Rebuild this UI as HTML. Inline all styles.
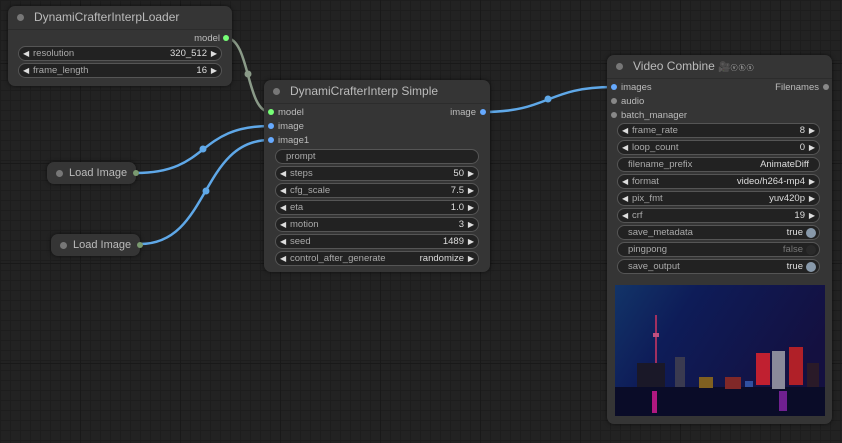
<!DOCTYPE html><html><head><style>
body{margin:0;width:842px;height:443px;overflow:hidden;background:#222;font-family:"Liberation Sans",sans-serif;position:relative}
.grid{position:absolute;inset:0;background-image:linear-gradient(#1d1d1d 1px,transparent 1px),linear-gradient(90deg,#1d1d1d 1px,transparent 1px);background-size:10px 10px}
.grid2{position:absolute;inset:0;background-image:linear-gradient(#191919 1px,transparent 1px),linear-gradient(90deg,#191919 1px,transparent 1px);background-size:100px 100px;background-position:-20px -37px}
.node{position:absolute;background:#353535;border-radius:7px;box-shadow:0 0 4px rgba(0,0,0,.6)}
.title{position:absolute;left:0;right:0;top:0;height:23px;border-bottom:1px solid #2c2c2c;color:#bbb;font-size:12px;line-height:23px;padding-left:26px}
.title:before{content:"";position:absolute;left:9px;top:8px;width:7px;height:7px;border-radius:50%;background:#777}
.w{position:absolute;height:13px;border:1px solid #555;border-radius:8px;background:#222;color:#aaa;font-size:9.5px;line-height:13px}
.w .l{position:absolute;left:14px}.w .v{position:absolute;right:14px;color:#ddd}
.w .al{position:absolute;left:4px;top:0;font-size:8px;color:#ddd}.w .ar{position:absolute;right:4px;top:0;font-size:8px;color:#ddd}
.w.nl .l{left:10px}.w.nl .v{right:10px}
.s{position:absolute;font-size:9.5px;color:#bbb}
.d{position:absolute;width:6px;height:6px;border-radius:50%}
.tg{position:absolute;right:3px;top:1.5px;width:10px;height:10px;border-radius:50%;background:#8899aa}
</style></head><body>
<div class="grid"></div><div class="grid2"></div>
<svg style="position:absolute;left:0;top:0" width="842" height="443">
<path d="M226,38 C250,38 246,112 270,112" stroke="#8a9a88" stroke-width="2.5" fill="none"/>
<circle cx="248" cy="74" r="3.5" fill="#8a9a88"/>
<path d="M136,173 C210,173 196,126 270,126" stroke="#5fa8e8" stroke-width="2.5" fill="none"/>
<circle cx="203" cy="149" r="3.5" fill="#5fa8e8"/>
<path d="M140,244 C210,244 200,140 270,140" stroke="#5fa8e8" stroke-width="2.5" fill="none"/>
<circle cx="206" cy="191" r="3.5" fill="#5fa8e8"/>
<path d="M483,112 C550,112 546,87 613,87" stroke="#5fa8e8" stroke-width="2.5" fill="none"/>
<circle cx="548" cy="99" r="3.5" fill="#5fa8e8"/>
</svg>

<div class="node" style="left:8px;top:6px;width:224px;height:80px">
<div class="title">DynamiCrafterInterpLoader</div>
<div class="s" style="right:12px;top:27px">model</div><div class="d" style="right:3px;top:29px;background:#7f7"></div>
<div class="w" style="left:10px;top:40px;width:202px"><span class="al">◀</span><span class="l">resolution</span><span class="v">320_512</span><span class="ar">▶</span></div>
<div class="w" style="left:10px;top:57px;width:202px"><span class="al">◀</span><span class="l">frame_length</span><span class="v">16</span><span class="ar">▶</span></div>
</div>

<div class="node" style="left:47px;top:162px;width:89px;height:22px"><div class="title" style="border:0;height:22px;line-height:22px;font-size:11px;padding-left:22px">Load Image</div><div class="d" style="right:-3px;top:8px;background:#7a9a70"></div></div>
<div class="node" style="left:51px;top:234px;width:89px;height:22px"><div class="title" style="border:0;height:22px;line-height:22px;font-size:11px;padding-left:22px">Load Image</div><div class="d" style="right:-3px;top:8px;background:#7a9a70"></div></div>

<div class="node" style="left:264px;top:80px;width:226px;height:192px">
<div class="title">DynamiCrafterInterp Simple</div>
<div class="d" style="left:4px;top:29px;background:#7f7"></div><div class="s" style="left:14px;top:27px">model</div>
<div class="d" style="left:4px;top:43px;background:#6af"></div><div class="s" style="left:14px;top:41px">image</div>
<div class="d" style="left:4px;top:57px;background:#6af"></div><div class="s" style="left:14px;top:55px">image1</div>
<div class="s" style="right:14px;top:27px">image</div><div class="d" style="right:4px;top:29px;background:#6af"></div>
<div class="w nl" style="left:11px;top:69px;width:202px"><span class="l">prompt</span></div>
<div class="w" style="left:11px;top:86px;width:202px"><span class="al">◀</span><span class="l">steps</span><span class="v">50</span><span class="ar">▶</span></div>
<div class="w" style="left:11px;top:103px;width:202px"><span class="al">◀</span><span class="l">cfg_scale</span><span class="v">7.5</span><span class="ar">▶</span></div>
<div class="w" style="left:11px;top:120px;width:202px"><span class="al">◀</span><span class="l">eta</span><span class="v">1.0</span><span class="ar">▶</span></div>
<div class="w" style="left:11px;top:137px;width:202px"><span class="al">◀</span><span class="l">motion</span><span class="v">3</span><span class="ar">▶</span></div>
<div class="w" style="left:11px;top:154px;width:202px"><span class="al">◀</span><span class="l">seed</span><span class="v">1489</span><span class="ar">▶</span></div>
<div class="w" style="left:11px;top:171px;width:202px"><span class="al">◀</span><span class="l">control_after_generate</span><span class="v">randomize</span><span class="ar">▶</span></div>
</div>

<div class="node" style="left:607px;top:55px;width:225px;height:369px">
<div class="title">Video Combine <span style="font-size:10px;color:#ccc">🎥</span><span style="font-size:7px;color:#ccc;letter-spacing:1px">ⓥⓗⓢ</span></div>
<div class="d" style="left:4px;top:29px;background:#6af"></div><div class="s" style="left:14px;top:27px">images</div>
<div class="d" style="left:4px;top:43px;background:#888"></div><div class="s" style="left:14px;top:41px">audio</div>
<div class="d" style="left:4px;top:57px;background:#888"></div><div class="s" style="left:14px;top:55px">batch_manager</div>
<div class="s" style="right:13px;top:27px">Filenames</div><div class="d" style="right:3px;top:29px;background:#888"></div>
<div class="w" style="left:10px;top:68px;width:201px"><span class="al">◀</span><span class="l">frame_rate</span><span class="v">8</span><span class="ar">▶</span></div>
<div class="w" style="left:10px;top:85px;width:201px"><span class="al">◀</span><span class="l">loop_count</span><span class="v">0</span><span class="ar">▶</span></div>
<div class="w nl" style="left:10px;top:102px;width:201px"><span class="l">filename_prefix</span><span class="v">AnimateDiff</span></div>
<div class="w" style="left:10px;top:119px;width:201px"><span class="al">◀</span><span class="l">format</span><span class="v">video/h264-mp4</span><span class="ar">▶</span></div>
<div class="w" style="left:10px;top:136px;width:201px"><span class="al">◀</span><span class="l">pix_fmt</span><span class="v">yuv420p</span><span class="ar">▶</span></div>
<div class="w" style="left:10px;top:153px;width:201px"><span class="al">◀</span><span class="l">crf</span><span class="v">19</span><span class="ar">▶</span></div>
<div class="w nl" style="left:10px;top:170px;width:201px"><span class="l">save_metadata</span><span class="v" style="right:16px">true</span><span class="tg"></span></div>
<div class="w nl" style="left:10px;top:187px;width:201px"><span class="l">pingpong</span><span class="v" style="right:16px;color:#777">false</span><span class="tg" style="background:#2a2a2a"></span></div>
<div class="w nl" style="left:10px;top:204px;width:201px"><span class="l">save_output</span><span class="v" style="right:16px">true</span><span class="tg"></span></div>
<svg style="position:absolute;left:8px;top:230px" width="210" height="131">
<defs><linearGradient id="sk" x1="0" y1="0" x2="1" y2="0.4"><stop offset="0" stop-color="#123468"/><stop offset=".35" stop-color="#0e1c58"/><stop offset="1" stop-color="#141040"/></linearGradient></defs>
<rect width="210" height="131" fill="url(#sk)"/>
<rect y="102" width="210" height="29" fill="#0a0c28"/>
<rect x="40" y="30" width="2" height="52" fill="#a03060"/><rect x="38" y="48" width="6" height="4" fill="#c05080"/>
<rect x="22" y="78" width="28" height="24" fill="#1a1828"/>
<rect x="60" y="72" width="10" height="30" fill="#3a3a50"/>
<rect x="84" y="92" width="14" height="11" fill="#806020"/><rect x="110" y="92" width="16" height="12" fill="#802828"/>
<rect x="130" y="96" width="8" height="6" fill="#3050a0"/>
<rect x="141" y="68" width="14" height="32" fill="#c02030"/>
<rect x="157" y="66" width="13" height="38" fill="#8a8a9a"/>
<rect x="174" y="62" width="14" height="38" fill="#b02028"/>
<rect x="192" y="78" width="12" height="24" fill="#2a1a28"/>
<rect x="37" y="106" width="5" height="22" fill="#b01880"/>
<rect x="164" y="106" width="8" height="20" fill="#702090"/>
</svg>
</div>
</body></html>
